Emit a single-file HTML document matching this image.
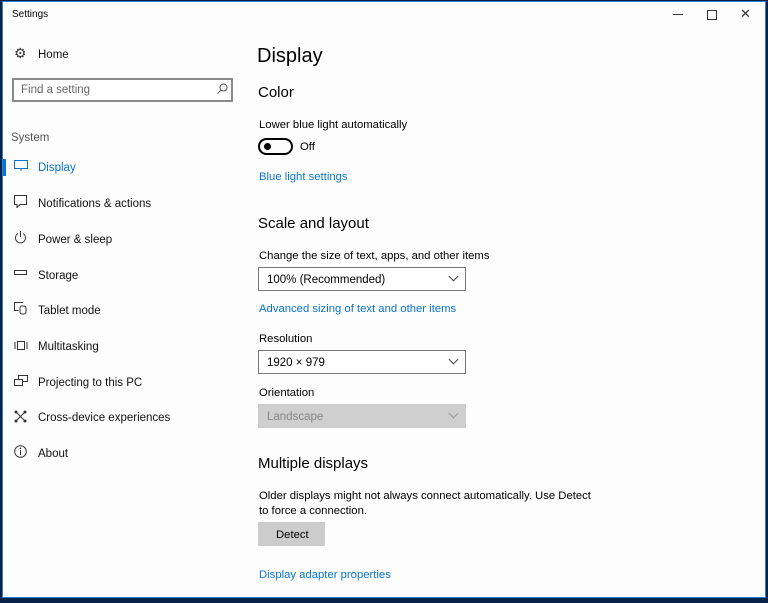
<!DOCTYPE html><html><head><style>
body{margin:0;width:768px;height:603px;background:#06244a;position:relative;overflow:hidden;font-family:"Liberation Sans",sans-serif;}
.win{position:absolute;left:2px;top:1px;width:762px;height:595px;background:#fdfdfd;border:1px solid #2f7fd3;}
.a{position:absolute;white-space:nowrap;color:#000;}
.nav{font-size:11.5px;color:#111;margin-top:1.5px}
.ic{position:absolute;}
.link{color:#0a73d0;font-size:11.3px;margin-top:2px}
.dd{position:absolute;left:258px;width:206px;height:22px;border:1px solid #777;background:#fff;font-size:11.5px;}
.dd span{position:absolute;left:8px;top:5.5px}
.chev{position:absolute;right:8px;top:5px;width:6px;height:6px;border-right:1px solid #444;border-bottom:1px solid #444;transform:rotate(45deg)}
.b{font-size:11.3px;margin-top:1.5px}
.h{font-size:15px}
</style></head><body><div class="win"></div>
<div class="a" style="left:12px;top:9px;font-size:10px">Settings</div>
<div class="a" style="left:673px;top:14px;width:10px;border-top:1px solid #333"></div>
<div class="a" style="left:707px;top:10px;width:8px;height:8px;border:1px solid #333"></div>
<div class="a" style="left:740px;top:6px;font-size:13px;color:#333">✕</div>
<div class="a" style="left:14px;top:45px;font-size:14px;color:#333">⚙</div>
<div class="a nav" style="left:38px;top:47px">Home</div>
<div class="a" style="left:12px;top:78px;width:217px;height:20px;border:2px solid #8a8a8a;background:#fff"></div>
<div class="a" style="left:21px;top:83.5px;font-size:11.5px;color:#666">Find a setting</div>
<svg class="ic" style="left:217px;top:83px" width="11" height="11"><circle cx="6.5" cy="4.5" r="3.5" fill="none" stroke="#555"/><line x1="4" y1="7" x2="0.5" y2="10.5" stroke="#555"/></svg>
<div class="a" style="left:11px;top:131.5px;font-size:11.5px;color:#555">System</div>
<div class="a" style="left:3px;top:159px;width:3px;height:17px;background:#0a73d0"></div>
<svg class="ic" style="left:14px;top:160px" width="14" height="12"><rect x="0.5" y="0.5" width="13" height="8" fill="none" stroke="#0a73d0"/><line x1="7" y1="9" x2="7" y2="11" stroke="#0a73d0"/></svg>
<div class="a nav" style="left:38px;top:160px;color:#0a73d0">Display</div>
<svg class="ic" style="left:14px;top:195px" width="13" height="13"><path d="M0.5 0.5h12v9H6l-3 3v-3H0.5z" fill="none" stroke="#333"/></svg>
<div class="a nav" style="left:38px;top:196px">Notifications &amp; actions</div>
<svg class="ic" style="left:14px;top:231px" width="13" height="13"><path d="M4 2.5A5 5 0 1 0 9 2.5" fill="none" stroke="#333"/><line x1="6.5" y1="0" x2="6.5" y2="6" stroke="#333"/></svg>
<div class="a nav" style="left:38px;top:232px">Power &amp; sleep</div>
<svg class="ic" style="left:14px;top:270px" width="13" height="6"><rect x="0.5" y="0.5" width="12" height="4" fill="none" stroke="#333"/></svg>
<div class="a nav" style="left:38px;top:268px">Storage</div>
<svg class="ic" style="left:14px;top:302px" width="14" height="14"><path d="M9 0.5H0.5v8h4" fill="none" stroke="#333"/><rect x="6" y="4" width="6" height="8" rx="2" fill="none" stroke="#333"/></svg>
<div class="a nav" style="left:38px;top:303px">Tablet mode</div>
<svg class="ic" style="left:14px;top:341px" width="14" height="9"><rect x="3.5" y="0.5" width="7" height="8" fill="none" stroke="#333"/><line x1="1" y1="1" x2="1" y2="8" stroke="#333"/><line x1="13" y1="1" x2="13" y2="8" stroke="#333"/></svg>
<div class="a nav" style="left:38px;top:339px">Multitasking</div>
<svg class="ic" style="left:14px;top:375px" width="14" height="12"><rect x="4.5" y="0.5" width="9" height="6" fill="none" stroke="#333"/><rect x="0.5" y="4.5" width="8" height="6" fill="#fff" stroke="#333"/></svg>
<div class="a nav" style="left:38px;top:375px">Projecting to this PC</div>
<svg class="ic" style="left:14px;top:410px" width="13" height="13"><path d="M2 2L11 11M11 2L2 11" stroke="#333"/><circle cx="2" cy="2" r="1.5" fill="#333"/><circle cx="11" cy="2" r="1.5" fill="#333"/><circle cx="2" cy="11" r="1.5" fill="#333"/><circle cx="11" cy="11" r="1.5" fill="#333"/></svg>
<div class="a nav" style="left:38px;top:410px">Cross-device experiences</div>
<svg class="ic" style="left:14px;top:445px" width="13" height="13"><circle cx="6.5" cy="6.5" r="5.8" fill="none" stroke="#333"/><line x1="6.5" y1="5" x2="6.5" y2="10" stroke="#333"/><circle cx="6.5" cy="3.3" r=".8" fill="#333"/></svg>
<div class="a nav" style="left:38px;top:446px">About</div>

<div class="a" style="left:257px;top:45px;font-size:20px">Display</div>
<div class="a h" style="left:258px;top:84px">Color</div>
<div class="a b" style="left:259px;top:117px">Lower blue light automatically</div>
<div class="a" style="left:258px;top:138px;width:31px;height:13px;border:2px solid #000;border-radius:9px"></div>
<div class="a" style="left:264px;top:143px;width:7px;height:7px;border-radius:50%;background:#000"></div>
<div class="a b" style="left:300px;top:139px">Off</div>
<div class="a link" style="left:259px;top:169px">Blue light settings</div>
<div class="a h" style="left:258px;top:215px">Scale and layout</div>
<div class="a b" style="left:259px;top:248px">Change the size of text, apps, and other items</div>
<div class="dd" style="top:267px"><span>100% (Recommended)</span><div class="chev"></div></div>
<div class="a link" style="left:259px;top:301px">Advanced sizing of text and other items</div>
<div class="a b" style="left:259px;top:331px">Resolution</div>
<div class="dd" style="top:350px"><span>1920 × 979</span><div class="chev"></div></div>
<div class="a b" style="left:259px;top:385px">Orientation</div>
<div class="dd" style="top:404px;border-color:#ccc;background:#cfcfcf;color:#888"><span>Landscape</span><div class="chev" style="border-color:#999"></div></div>
<div class="a h" style="left:258px;top:455px">Multiple displays</div>
<div class="a b" style="left:259px;top:487px;line-height:15px">Older displays might not always connect automatically. Use Detect<br>to force a connection.</div>
<div class="a" style="left:258px;top:522px;width:67px;height:24px;background:#ccc"></div>
<div class="a b" style="left:276px;top:527px">Detect</div>
<div class="a link" style="left:259px;top:567px">Display adapter properties</div>
</body></html>
